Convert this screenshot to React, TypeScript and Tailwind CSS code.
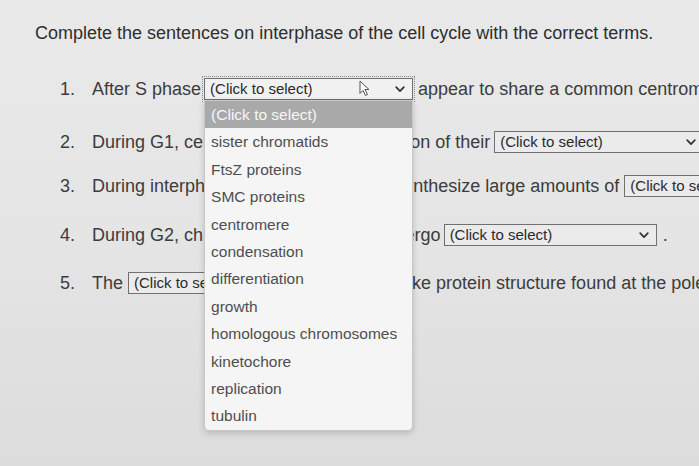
import React from "react";

const font = { fontFamily: '"Liberation Sans", Arial, sans-serif' };

function Chevron() {
  return (
    <svg width="10" height="7" viewBox="0 0 10 7" className="shrink-0">
      <path d="M1.2 1.2 L5 5.2 L8.8 1.2" fill="none" stroke="#333" strokeWidth="1.7" strokeLinecap="round" strokeLinejoin="round" />
    </svg>
  );
}

function Select({ w, cls = "" }: { w: string; cls?: string }) {
  return (
    <span
      className={`inline-flex h-[22px] shrink-0 items-center justify-between border border-[#707070] bg-[#ebebeb] pl-[5px] pr-[7px] text-[15px] text-[#2a2a2a] ${w} ${cls}`}
    >
      <span>(Click to select)</span>
      <Chevron />
    </span>
  );
}

const options = [
  "sister chromatids",
  "FtsZ proteins",
  "SMC proteins",
  "centromere",
  "condensation",
  "differentiation",
  "growth",
  "homologous chromosomes",
  "kinetochore",
  "replication",
  "tubulin",
];

function Row({ n, children, h }: { n: string; children: React.ReactNode; h: string }) {
  return (
    <div className={`flex items-center whitespace-nowrap ${h}`}>
      <span className="w-[32px] shrink-0">{n}</span>
      {children}
    </div>
  );
}

export default function App() {
  return (
    <div
      style={font}
      className="relative h-[466px] w-[699px] overflow-hidden bg-gradient-to-b from-[#e9e9e9] via-[#e5e5e5] to-[#dcdcdc] text-[18px] text-[#3c3c3c]"
    >
      <div className="pl-[35px] pt-[20px] whitespace-nowrap text-[18px] leading-[27px] text-[#2e2e2e]">
        Complete the sentences on interphase of the cell cycle with the correct terms.
      </div>

      <div className="mt-[29px] pl-[60px]">
        <Row n="1." h="h-[26px]">
          <span>After S phase</span>
          <span className="relative ml-[1px] mr-[3px] inline-flex border border-dotted border-[#8a8a8a] p-[1px]">
            <Select w="w-[209px]" cls="bg-[#f1f1f1]" />
            {/* cursor */}
            <svg width="12" height="17" viewBox="0 0 12 17" className="absolute left-[156px] top-[3px]">
              <path d="M1 1 L1 13.5 L4 10.5 L6.5 15.5 L8.5 14.5 L6 9.5 L10 9.5 Z" fill="#fafafa" stroke="#555" strokeWidth="1" strokeLinejoin="round" />
            </svg>
            {/* dropdown */}
            <div className="absolute left-[1px] top-[23px] z-10 w-[209px] overflow-hidden rounded-b-[5px] border border-[#c8c8c8] bg-[#f5f5f5] text-[15.5px] text-[#4e4e4e] shadow-[0_2px_6px_rgba(0,0,0,0.18)]">
              <div className="flex h-[27.4px] items-center bg-[#a9a9a9] pl-[6px] text-[#f6f6f6]">(Click to select)</div>
              {options.map((o) => (
                <div key={o} className="flex h-[27.4px] items-center pl-[6px]">
                  {o}
                </div>
              ))}
            </div>
          </span>
          <span>appear to share a common centromere.</span>
        </Row>

        <Row n="2." h="mt-[27px] h-[26px]">
          <span>During G1, cells grow and start duplication of their</span>
          <Select w="w-[210px]" cls="ml-[4px]" />
        </Row>

        <Row n="3." h="mt-[18px] h-[26px]">
          <span>During interphase, the cell goes on to synthesize large amounts of</span>
          <Select w="w-[210px]" cls="ml-[5px]" />
        </Row>

        <Row n="4." h="mt-[23px] h-[26px]">
          <span>During G2, chromosomes don&apos;t yet undergo</span>
          <Select w="w-[213px]" cls="ml-[3px]" />
          <span className="ml-[6px]">.</span>
        </Row>

        <Row n="5." h="mt-[22px] h-[26px]">
          <span>The</span>
          <Select w="w-[200px]" cls="ml-[5px]" />
          <span className="ml-[5px]">is a disk-like protein structure found at the poles.</span>
        </Row>
      </div>
    </div>
  );
}
